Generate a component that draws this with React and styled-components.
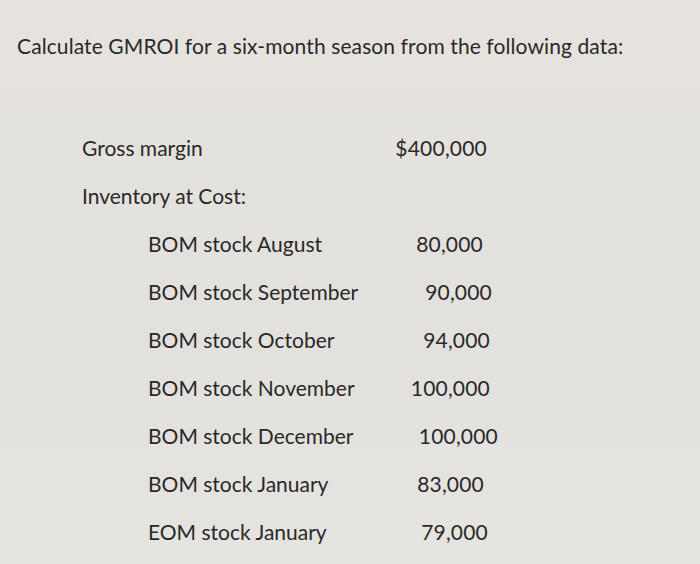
import React from "react";
import styled, { createGlobalStyle } from "styled-components";

const GlobalStyle = createGlobalStyle`
  html, body {
    margin: 0;
    padding: 0;
    background: #e5e2de;
  }
  body {
    font-family: Lato, "Open Sans", sans-serif;
    color: #292929;
  }
`;

const Page = styled.div`
  width: 700px;
  height: 564px;
  box-sizing: border-box;
  padding: 32px 0 0 17px;
  background: linear-gradient(180deg, #e6e3df 0%, #e3e1dd 60%, #e6e4e0 100%);
  overflow: hidden;
`;

const Title = styled.h1`
  margin: 0;
  font-size: 21px;
  font-weight: 400;
  line-height: 28px;
  letter-spacing: 0.1px;
`;

const Table = styled.div`
  margin: 63px 0 0 65px;
  width: 409px;
  display: grid;
  grid-template-columns: 1fr auto;
  grid-auto-rows: 48px;
  align-items: center;
  font-size: 21px;
`;

const Label = styled.div`
  padding-left: ${(p) => (p.indent ? "66px" : "0")};
`;

const Value = styled.div`
  text-align: right;
  letter-spacing: 0.2px;
  transform: translateX(${(p) => p.nudge || 0}px);
`;

const rows = [
  { label: "Gross margin", value: "$400,000", nudge: -4 },
  { label: "Inventory at Cost:", value: "" },
  { label: "BOM stock August", value: "80,000", indent: true, nudge: -8 },
  { label: "BOM stock September", value: "90,000", indent: true, nudge: 1 },
  { label: "BOM stock October", value: "94,000", indent: true, nudge: -1 },
  { label: "BOM stock November", value: "100,000", indent: true, nudge: -1 },
  { label: "BOM stock December", value: "100,000", indent: true, nudge: 7 },
  { label: "BOM stock January", value: "83,000", indent: true, nudge: -7 },
  { label: "EOM stock January", value: "79,000", indent: true, nudge: -3 },
];

export default function App() {
  return (
    <Page>
      <GlobalStyle />
      <Title>Calculate GMROI for a six-month season from the following data:</Title>
      <Table>
        {rows.map((r) => (
          <React.Fragment key={r.label}>
            <Label indent={r.indent}>{r.label}</Label>
            <Value nudge={r.nudge}>{r.value}</Value>
          </React.Fragment>
        ))}
      </Table>
    </Page>
  );
}
